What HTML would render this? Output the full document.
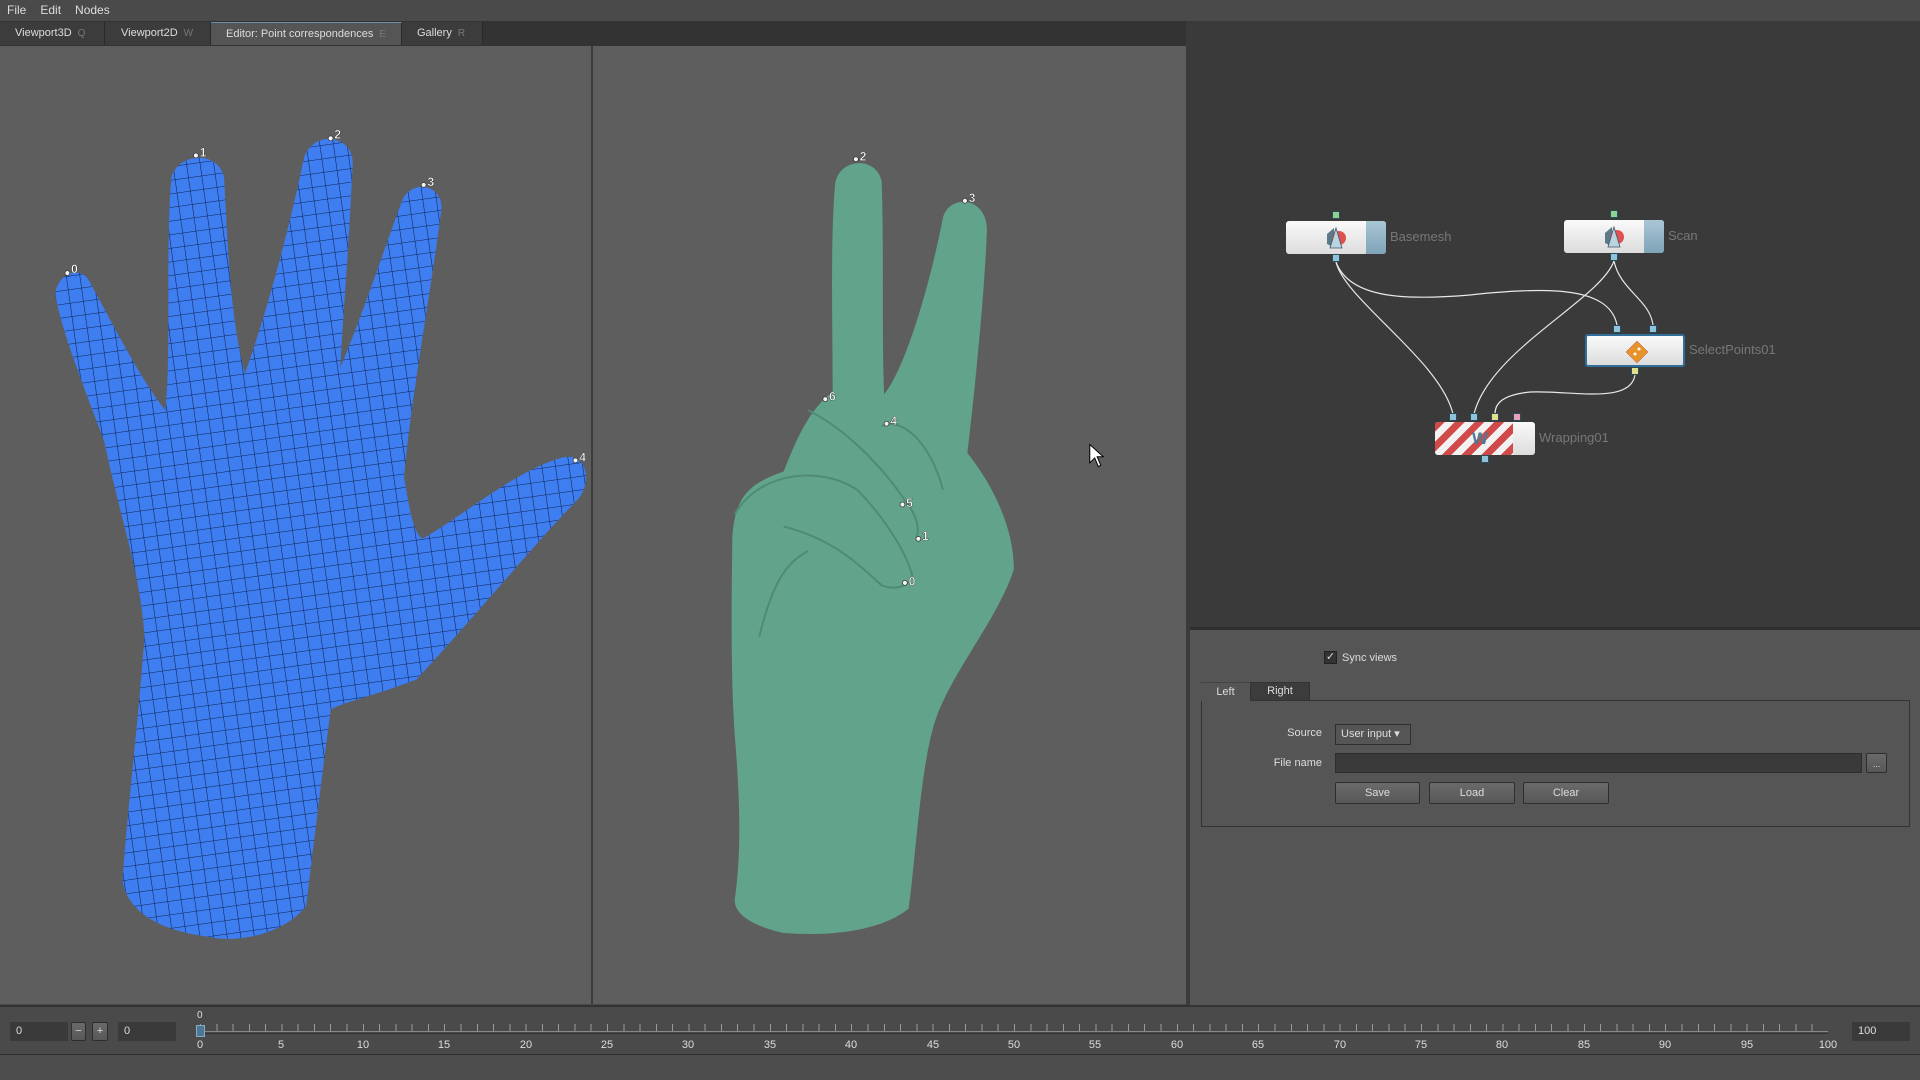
<!DOCTYPE html>
<html><head><meta charset="utf-8"><style>
*{margin:0;padding:0;box-sizing:border-box}
body{width:1920px;height:1080px;background:#4a4a4a;font-family:"Liberation Sans",sans-serif;font-size:12px;color:#ddd;position:relative;overflow:hidden}
.a{position:absolute;white-space:nowrap}
.menu span{margin-right:14px}
.tab{position:absolute;top:22px;height:23px;line-height:23px;font-size:11px;color:#ddd;padding-left:15px;background:#3c3c3c;border-right:1px solid #2a2a2a;white-space:nowrap;overflow:hidden}
.tab i{font-style:normal;color:#777;margin-left:6px;font-size:10px}
.node{position:absolute;height:33px;background:linear-gradient(#fafafa,#dcdcdc);border-radius:3px}
.port{position:absolute;width:8px;height:8px;border:1px solid #2b4a5a}
.lbl{position:absolute;color:#777;font-size:13px;white-space:nowrap}
.btn{position:absolute;height:22px;background:linear-gradient(#6a6a6a,#585858);border:1px solid #2e2e2e;color:#ddd;font-size:11px;text-align:center;line-height:20px;border-radius:2px;white-space:nowrap}
.tn{position:absolute;top:1039px;font-size:11px;color:#ddd;width:30px;margin-left:-15px;text-align:center}
</style></head><body>
<div class="a menu" style="left:7px;top:3px;font-size:12px"><span>File</span><span>Edit</span><span>Nodes</span></div>
<div class="a" style="left:0;top:21px;width:1186px;height:25px;background:#333"></div>
<div class="tab" style="left:0;width:105px">Viewport3D<i>Q</i></div>
<div class="tab" style="left:105px;width:106px;padding-left:16px">Viewport2D<i>W</i></div>
<div class="tab" style="left:211px;width:191px;background:#555;border-top:1px solid #6b8eab">Editor: Point correspondences<i>E</i></div>
<div class="tab" style="left:402px;width:81px">Gallery<i>R</i></div>
<div class="a" style="left:0;top:46px;width:591px;height:958px;background:#5e5e5e"></div>
<div class="a" style="left:591px;top:46px;width:2px;height:958px;background:#3c3c3c"></div>
<div class="a" style="left:593px;top:46px;width:593px;height:958px;background:#5e5e5e"></div>
<div class="a" style="left:1186px;top:21px;width:4px;height:984px;background:#3a3a3a"></div>
<div class="a" style="left:1190px;top:21px;width:730px;height:606px;background:#3a3a3a"></div>
<div class="a" style="left:1190px;top:627px;width:730px;height:3px;background:#2e2e2e"></div>
<div class="a" style="left:1190px;top:630px;width:730px;height:375px;background:#555"></div>
<svg class="a" style="left:0;top:0" width="1920" height="1080" fill="none" stroke="#e8e8e8" stroke-width="1.2">
<path d="M1336 262 C1345 300 1440 360 1453 414"/>
<path d="M1336 262 C1350 300 1410 300 1470 295 C1560 285 1610 290 1617 325"/>
<path d="M1614 261 C1600 300 1490 350 1474 414"/>
<path d="M1614 261 C1620 290 1650 300 1653 325"/>
<path d="M1635 375 C1630 405 1570 390 1530 392 C1500 395 1495 405 1495 414"/>
</svg>
<div class="node" style="left:1286px;top:221px;width:100px"><div class="a" style="right:0;top:0;width:20px;height:33px;background:linear-gradient(#a9c6d6,#7fa3b8);border-radius:0 3px 3px 0"></div>
<svg class="a" style="left:38px;top:5px" width="24" height="24"><path d="M10 2 L3 8 L3 18 L11 22 Z" fill="#5a7a8a"/><circle cx="15" cy="12" r="7" fill="#e05050"/><path d="M12 2 L6 22 L18 22 Z" fill="#b8d4e0" stroke="#456" stroke-width=".8"/></svg></div>
<div class="lbl" style="left:1390px;top:229px">Basemesh</div>
<div class="node" style="left:1564px;top:220px;width:100px"><div class="a" style="right:0;top:0;width:20px;height:33px;background:linear-gradient(#a9c6d6,#7fa3b8);border-radius:0 3px 3px 0"></div>
<svg class="a" style="left:38px;top:5px" width="24" height="24"><path d="M10 2 L3 8 L3 18 L11 22 Z" fill="#5a7a8a"/><circle cx="15" cy="12" r="7" fill="#e05050"/><path d="M12 2 L6 22 L18 22 Z" fill="#b8d4e0" stroke="#456" stroke-width=".8"/></svg></div>
<div class="lbl" style="left:1668px;top:228px">Scan</div>
<div class="node" style="left:1585px;top:334px;width:100px;border:2px solid #2f6f99"><svg class="a" style="left:38px;top:4px" width="24" height="24"><path d="M12 1 L23 12 L12 23 L1 12 Z" fill="#e8922a" stroke="#a55" stroke-width=".5"/><circle cx="10" cy="14" r="1.5" fill="#fff"/><circle cx="14" cy="9" r="1.5" fill="#fff"/></svg></div>
<div class="lbl" style="left:1689px;top:342px">SelectPoints01</div>
<div class="node" style="left:1435px;top:422px;width:100px;overflow:hidden"><div class="a" style="left:0;top:0;width:78px;height:33px;background:repeating-linear-gradient(135deg,#d14a4a 0 7px,#f2f2f2 7px 14px)"></div><div class="a" style="left:37px;top:7px;font:bold 17px 'Liberation Sans';color:#4c7a94">W</div></div>
<div class="lbl" style="left:1539px;top:430px">Wrapping01</div>
<div class="port" style="left:1332px;top:211px;background:#8fd18f"></div>
<div class="port" style="left:1332px;top:254px;background:#8fc3dc"></div>
<div class="port" style="left:1610px;top:210px;background:#8fd18f"></div>
<div class="port" style="left:1610px;top:253px;background:#8fc3dc"></div>
<div class="port" style="left:1613px;top:325px;background:#8fc3dc"></div>
<div class="port" style="left:1649px;top:325px;background:#8fc3dc"></div>
<div class="port" style="left:1631px;top:367px;background:#e0e08a"></div>
<div class="port" style="left:1449px;top:413px;background:#8fc3dc"></div>
<div class="port" style="left:1470px;top:413px;background:#8fc3dc"></div>
<div class="port" style="left:1491px;top:413px;background:#e0e08a"></div>
<div class="port" style="left:1513px;top:413px;background:#e6a0b8"></div>
<div class="port" style="left:1481px;top:455px;background:#8fc3dc"></div>
<div class="a" style="left:1324px;top:651px;width:13px;height:13px;background:#333;border:1px solid #222;color:#ddd;font-size:11px;line-height:11px;text-align:center">✓</div>
<div class="a" style="left:1342px;top:652px;font-size:11px">Sync views</div>
<div class="a" style="left:1201px;top:700px;width:709px;height:127px;border:1px solid #333"></div>
<div class="a" style="left:1201px;top:682px;width:49px;height:19px;background:#555;text-align:center;line-height:19px;font-size:11px;border-top:1px solid #444">Left</div>
<div class="a" style="left:1250px;top:682px;width:60px;height:19px;background:#3c3c3c;border:1px solid #333;text-align:center;line-height:17px;font-size:11px">Right</div>
<div class="a" style="left:1240px;top:727px;width:82px;text-align:right;font-size:11px">Source</div>
<div class="a" style="left:1335px;top:724px;width:76px;height:21px;background:#555;border:1px solid #2e2e2e;font-size:11px;line-height:19px;padding-left:5px">User input ▾</div>
<div class="a" style="left:1230px;top:757px;width:92px;text-align:right;font-size:11px">File name</div>
<div class="a" style="left:1335px;top:753px;width:527px;height:20px;background:#3a3a3a;border:1px solid #2e2e2e"></div>
<div class="btn" style="left:1866px;top:753px;width:21px;height:20px;font-size:9px">...</div>
<div class="btn" style="left:1335px;top:782px;width:85px">Save</div>
<div class="btn" style="left:1429px;top:782px;width:86px">Load</div>
<div class="btn" style="left:1523px;top:782px;width:86px">Clear</div>
<div class="a" style="left:0;top:1005px;width:1920px;height:2px;background:#333"></div>
<div class="a" style="left:10px;top:1022px;width:58px;height:19px;background:#3a3a3a;padding:3px 6px;font-size:11px">0</div>
<div class="btn" style="left:71px;top:1022px;width:15px;height:19px;line-height:17px">−</div>
<div class="btn" style="left:92px;top:1022px;width:16px;height:19px;line-height:17px">+</div>
<div class="a" style="left:118px;top:1022px;width:58px;height:19px;background:#3a3a3a;padding:3px 6px;font-size:11px">0</div>
<div class="a" style="left:197px;top:1010px;font-size:10px">0</div>
<div class="a" style="left:200px;top:1024px;width:1628px;height:7px;background:repeating-linear-gradient(90deg,#999 0 1px,transparent 1px 16.28px)"></div>
<div class="a" style="left:200px;top:1031px;width:1628px;height:3px;border-top:1px solid #888;border-bottom:1px solid #333"></div>
<div class="a" style="left:196px;top:1025px;width:9px;height:12px;background:#4a7898;border:1px solid #8ab"></div>
<div class="tn" style="left:200px">0</div><div class="tn" style="left:281px">5</div><div class="tn" style="left:363px">10</div><div class="tn" style="left:444px">15</div><div class="tn" style="left:526px">20</div><div class="tn" style="left:607px">25</div><div class="tn" style="left:688px">30</div><div class="tn" style="left:770px">35</div><div class="tn" style="left:851px">40</div><div class="tn" style="left:933px">45</div><div class="tn" style="left:1014px">50</div><div class="tn" style="left:1095px">55</div><div class="tn" style="left:1177px">60</div><div class="tn" style="left:1258px">65</div><div class="tn" style="left:1340px">70</div><div class="tn" style="left:1421px">75</div><div class="tn" style="left:1502px">80</div><div class="tn" style="left:1584px">85</div><div class="tn" style="left:1665px">90</div><div class="tn" style="left:1747px">95</div><div class="tn" style="left:1828px">100</div>
<div class="a" style="left:1852px;top:1022px;width:58px;height:19px;background:#3a3a3a;padding:3px 6px;font-size:11px">100</div>
<div class="a" style="left:0;top:1054px;width:1920px;height:26px;background:#4d4d4d;border-top:1px solid #2e2e2e"></div>
<svg class="a" style="left:0;top:0" width="1920" height="1080" viewBox="0 0 1568 882">
<defs>
<pattern id="g" width="11" height="11" patternUnits="userSpaceOnUse" patternTransform="rotate(-8)"><path d="M0 0H11M0 0V11" stroke="#0f2250" stroke-width="0.9" fill="none"/></pattern>
<clipPath id="bh"><path id="bp" d="M100 720 C105 650 112 600 118 520 C115 470 100 430 85 360 C70 320 50 270 45 240 C48 222 65 218 72 228 C95 270 115 310 135 335 C140 290 135 200 140 145 C145 125 178 122 183 145 C186 200 188 260 200 305 C220 250 240 170 248 130 C255 105 290 110 288 135 C285 200 280 260 278 300 C295 260 315 200 328 165 C335 145 365 150 360 175 C350 250 335 330 330 390 C335 420 338 435 345 440 C380 420 420 385 458 374 C480 368 485 395 470 410 C440 440 400 490 340 555 C300 570 275 575 270 580 C262 640 255 700 250 740 C230 765 190 770 170 765 C130 760 105 745 100 720 Z"/></clipPath>
</defs>
<use href="#bp" fill="#3f7ef0"/>
<rect x="40" y="100" width="450" height="680" fill="url(#g)" clip-path="url(#bh)"/>
<path d="M680 320 C680 260 678 200 682 150 C686 128 716 128 720 148 C722 200 720 270 722 322 C740 300 760 230 770 178 C775 158 806 160 806 188 C804 240 796 320 790 370 C810 395 828 430 828 465 C815 505 780 545 765 585 C752 620 748 700 742 742 C720 760 680 765 640 762 C610 755 600 745 600 735 C605 700 605 660 600 600 C596 540 598 470 598 440 C600 405 612 395 640 385 C650 360 660 335 680 320 Z" fill="#62a38b"/>
<path d="M600 420 C620 385 670 380 700 400 C720 420 740 450 745 470 C742 480 730 482 720 478 C700 460 680 440 640 430 M660 335 C690 350 720 380 740 410 C748 420 752 432 748 440 M720 348 C735 340 760 360 770 400 M620 520 C630 480 640 460 660 450" stroke="#4f8a73" stroke-width="1.6" fill="none"/>
<g fill="#f4f4f4" stroke="#333" stroke-width=".6"><circle cx="55" cy="223" r="2"/><circle cx="160" cy="127" r="2"/><circle cx="270" cy="113" r="2"/><circle cx="346" cy="151" r="2"/><circle cx="470" cy="376" r="2"/>
<circle cx="699" cy="130" r="2"/><circle cx="788" cy="164" r="2"/><circle cx="674" cy="326" r="2"/><circle cx="724" cy="346" r="2"/><circle cx="737" cy="412" r="2"/><circle cx="750" cy="440" r="2"/><circle cx="739" cy="476" r="2"/></g>
<g fill="#fff" font-family="Liberation Sans" font-size="10" font-weight="bold" stroke="#222" stroke-width=".3">
<text x="58" y="223">0</text><text x="163" y="128">1</text><text x="273" y="113">2</text><text x="349" y="152">3</text><text x="473" y="377">4</text>
<text x="702" y="131">2</text><text x="791" y="165">3</text><text x="677" y="327">6</text><text x="727" y="347">4</text><text x="740" y="414">5</text><text x="753" y="441">1</text><text x="742" y="478">0</text></g>
<path d="M890 363 L890 378 L894 374 L897 381 L899 380 L896 373 L901 373 Z" fill="#fff" stroke="#000" stroke-width=".8"/>
</svg>
</body></html>
